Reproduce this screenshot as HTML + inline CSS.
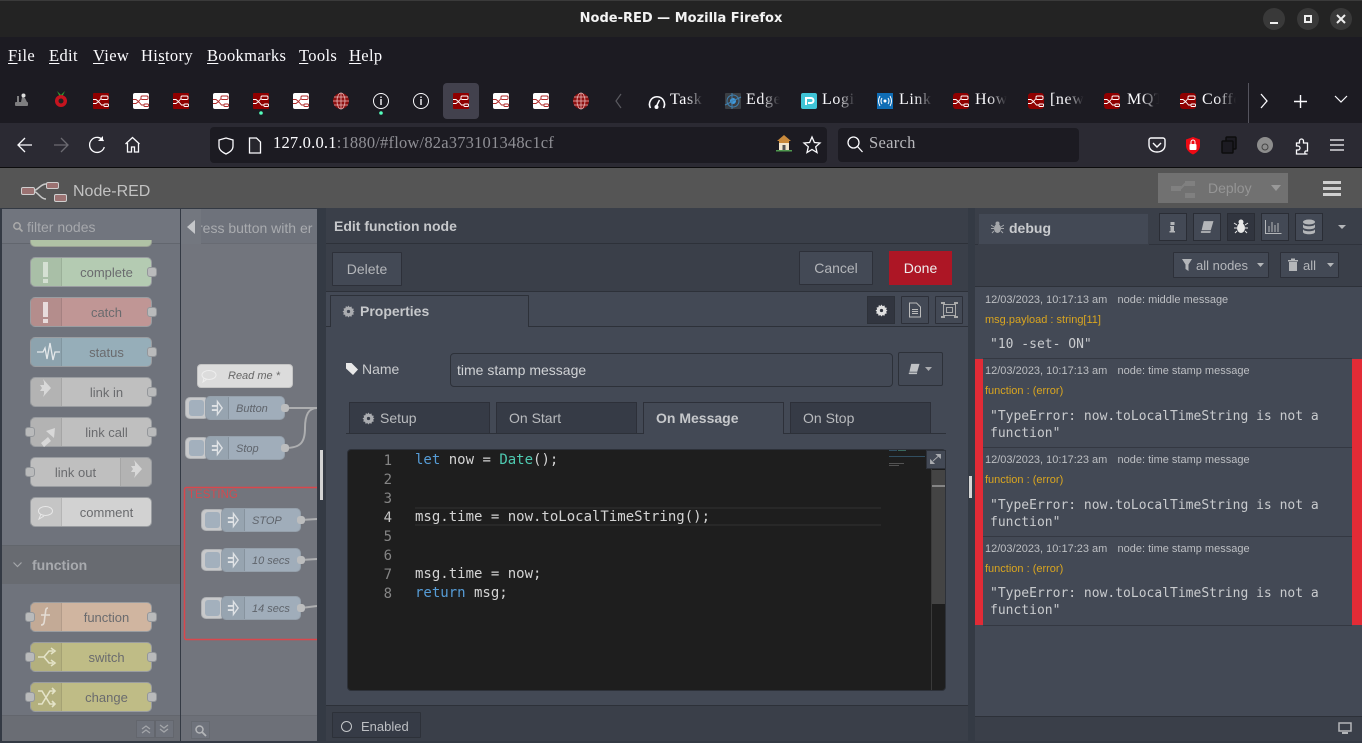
<!DOCTYPE html>
<html lang="en"><head><meta charset="utf-8"><title>Node-RED — Mozilla Firefox</title>
<style>
html,body{margin:0;padding:0;width:1362px;height:743px;overflow:hidden;background:#222;font-family:"Liberation Sans",sans-serif}
.a,.a *{box-sizing:border-box}
.a{position:absolute;white-space:nowrap}
.s{font-family:"Liberation Serif",serif;color:#fbfbfe}
.m{font-size:16.5px;top:46px;line-height:20px;letter-spacing:.35px}
.m u{text-underline-offset:2px}
.bk{font-size:16px;top:90px;line-height:20px;letter-spacing:.6px;overflow:hidden;-webkit-mask-image:linear-gradient(90deg,#000 45%,transparent);mask-image:linear-gradient(90deg,#000 45%,transparent)}
.btn{border:1px solid #2d3039;background:#434955;color:#b4b6ba;font-size:14px;text-align:center;border-radius:1px}
.pn{left:30px;width:122px;height:30px;border:1px solid #9a9da1;border-radius:5px;color:#6a6b6e;font-size:13px;text-align:center;line-height:30px;padding-left:31px}
.pn i{position:absolute;left:0;top:0;width:31px;height:28px;background:rgba(0,0,0,.06);border-right:1px solid rgba(0,0,0,.08)}
.pt{width:10px;height:10px;background:#b9babb;border:1px solid #94979b;border-radius:3px}
.cn{width:80px;height:24px;background:#a0adba;border:1px solid #95a0ab;border-radius:5px;color:#5f646b;font-size:11px;font-style:italic;line-height:24px;text-align:left;padding-left:30px}
.cn i{position:absolute;left:0;top:0;width:23px;height:22px;background:rgba(0,0,0,.05);border-right:1px solid rgba(0,0,0,.1)}
.cb{width:24px;height:22px;background:#c8c9cb;border:1px solid #b0b2b5;border-radius:5px}
.cb i{position:absolute;left:3px;top:2px;width:15px;height:16px;background:#a3b0bd;border-radius:3px}
.cp{width:8px;height:8px;background:#bcbdbe;border-radius:3px}
.ed{font-family:"DejaVu Sans Mono",monospace;font-size:14px;line-height:19px;color:#d4d4d4}
.ln{left:350px;color:#858585;font-family:"DejaVu Sans Mono",monospace;font-size:14px;line-height:19px;padding-left:30px;width:42px;text-align:right}
.tb{top:402px;width:141px;height:31px;background:#363b46;border:1px solid #2d3039;border-bottom:0;color:#b9bbbe;font-size:14px;line-height:30px;padding-left:12px}
.sb{top:213px;width:28px;height:28px;background:#434955;border:1px solid #2a2d35}
.msg{left:983px;width:369px;background:#434955;border-bottom:1px solid #343842}
.dt{position:absolute;left:2px;top:6px;font-size:11px;line-height:13px;color:#bdbfc3;white-space:pre}
.dt span{margin-left:1px}
.ty{position:absolute;left:2px;top:26px;font-size:11px;line-height:13px;color:#d9a520}
.bd{position:absolute;left:7px;font-family:"DejaVu Sans Mono",monospace;font-size:13px;line-height:17px;color:#c9cbce;white-space:pre}
.red{left:975px;width:8px;background:#e22b36}
.red2{left:1352px;width:10px;background:#e22b36}
</style></head>
<body>
<svg width="0" height="0" style="position:absolute">
<symbol id="nr" viewBox="0 0 16 16"><path d="M0 6.500h3l2.500 2-2.500 2H0M5.500 8.500L8 5.500M5.500 8.500l3 3.500H11" fill="none" stroke="currentColor" stroke-width=".9"/><rect x="8" y="3" width="7" height="3.500" rx="1.200" fill="none" stroke="currentColor" stroke-width=".9"/><rect x="11" y="11" width="4.500" height="2.500" rx=".8" fill="none" stroke="currentColor" stroke-width=".9"/></symbol>
<symbol id="gear" viewBox="0 0 12 12"><path d="M6 .5l1 1.500 1.800-.6.300 1.800 1.800.3-.6 1.800L11.500 6l-1.200 1 .6 1.800-1.800.3-.3 1.800-1.800-.6-1 1.200-1-1.200-1.800.6-.3-1.800-1.800-.3.600-1.800L.5 6l1.500-1-.6-1.800 1.800-.3.300-1.800 1.800.6z M6 4.500a1.500 1.500 0 100 3 1.500 1.500 0 000-3z" fill="currentColor" fill-rule="evenodd"/></symbol>
<symbol id="arr" viewBox="0 0 14 20"><path d="M7.500 2.500l5.500 7.500-5.500 7.500z" fill="none" stroke="currentColor" stroke-width="1.600"/><path d="M1 6.500h7v2.200H1zM1 11.300h7v2.200H1z" fill="currentColor"/></symbol>
<symbol id="book" viewBox="0 0 13 13"><path d="M3.500 1H12.500L10 9.500H1.500z" fill="currentColor"/><path d="M1.500 10.300H10l-.4 1.700H1.500c-1 0-1-1.700 0-1.700z" fill="currentColor"/></symbol>
</svg>

<!-- title bar -->
<div class="a" style="left:0;top:0;width:1362px;height:37px;background:#232323;border-top:1px solid #3a3a3a"></div>
<div class="a" style="left:0;top:10px;width:1362px;text-align:center;font:bold 13px/18px 'DejaVu Sans',sans-serif;color:#f3f3f3">Node-RED — Mozilla Firefox</div>
<div class="a" style="left:1263px;top:8px;width:22px;height:22px;border-radius:50%;background:#393939"></div>
<div class="a" style="left:1270px;top:22px;width:8px;height:2px;background:#eee"></div>
<div class="a" style="left:1297px;top:8px;width:22px;height:22px;border-radius:50%;background:#393939"></div>
<div class="a" style="left:1304px;top:15px;width:8px;height:8px;border:2px solid #eee"></div>
<div class="a" style="left:1330px;top:8px;width:22px;height:22px;border-radius:50%;background:#393939"></div>
<svg class="a" style="left:1336px;top:14px" width="10" height="10"><path d="M1 1l8 8M9 1l-8 8" stroke="#eee" stroke-width="2"/></svg>

<!-- menu + bookmarks -->
<div class="a" style="left:0;top:37px;width:1362px;height:86px;background:#1c1b22"></div>
<div class="a s m" style="left:8px"><u>F</u>ile</div>
<div class="a s m" style="left:49px"><u>E</u>dit</div>
<div class="a s m" style="left:93px"><u>V</u>iew</div>
<div class="a s m" style="left:141px">Hi<u>s</u>tory</div>
<div class="a s m" style="left:207px"><u>B</u>ookmarks</div>
<div class="a s m" style="left:299px"><u>T</u>ools</div>
<div class="a s m" style="left:349px"><u>H</u>elp</div>

<div class="a" style="left:443px;top:83px;width:36px;height:36px;background:#42414d;border-radius:4px"></div>
<svg class="a" style="left:0;top:83px" width="640" height="40">
<g transform="translate(15,10)" fill="#7e7e80"><rect y="9" width="13" height="4" rx="1"/><path d="M2 9V3h2v6zM6 9l1-5 3 1 2 4z"/><circle cx="8.500" cy="2.500" r="2" fill="#ddd"/></g>
<g transform="translate(54,8)"><path d="M3 0l4 4 4-4-3 6H6z" fill="#2fa52f"/><circle cx="7" cy="10" r="6" fill="#c5141f"/><circle cx="7" cy="10" r="2.500" fill="#222"/></g>
<g fill="#8f0000"><rect x="93" y="10" width="16" height="16" rx="1"/><rect x="173" y="10" width="16" height="16" rx="1"/><rect x="253" y="10" width="16" height="16" rx="1"/><rect x="453" y="10" width="16" height="16" rx="1"/></g>
<g fill="#fff"><rect x="133" y="10" width="16" height="16" rx="2"/><rect x="213" y="10" width="16" height="16" rx="2"/><rect x="293" y="10" width="16" height="16" rx="2"/><rect x="493" y="10" width="16" height="16" rx="2"/><rect x="533" y="10" width="16" height="16" rx="2"/></g>
<g color="#fff"><use href="#nr" x="93" y="10" width="16" height="16"/><use href="#nr" x="173" y="10" width="16" height="16"/><use href="#nr" x="253" y="10" width="16" height="16"/><use href="#nr" x="453" y="10" width="16" height="16"/></g>
<g color="#b02a2a"><use href="#nr" x="133" y="10" width="16" height="16"/><use href="#nr" x="213" y="10" width="16" height="16"/><use href="#nr" x="293" y="10" width="16" height="16"/><use href="#nr" x="493" y="10" width="16" height="16"/><use href="#nr" x="533" y="10" width="16" height="16"/></g>
<g><circle cx="341" cy="18" r="8" fill="#8f1010"/><g fill="none" stroke="#e8b8b8" stroke-width=".8"><ellipse cx="341" cy="18" rx="4" ry="8"/><path d="M333 18h16M334 14h14M334 22h14M341 10v16"/></g></g>
<g><circle cx="581" cy="18" r="8" fill="#8f1010"/><g fill="none" stroke="#e8b8b8" stroke-width=".8"><ellipse cx="581" cy="18" rx="4" ry="8"/><path d="M573 18h16M574 14h14M574 22h14M581 10v16"/></g></g>
<g fill="none" stroke="#fbfbfe" stroke-width="1"><circle cx="381" cy="18" r="7.500"/><circle cx="421" cy="18" r="7.500"/></g>
<g fill="#fbfbfe"><rect x="380.300" y="16" width="1.400" height="6"/><rect x="380.300" y="13.500" width="1.400" height="1.500"/><rect x="420.300" y="16" width="1.400" height="6"/><rect x="420.300" y="13.500" width="1.400" height="1.500"/></g>
<circle cx="261" cy="30" r="1.800" fill="#54ffbd"/><circle cx="381" cy="30" r="1.800" fill="#54ffbd"/>
<path d="M621 11l-5 7 5 7" fill="none" stroke="#5a5a60" stroke-width="1.200"/>
</svg>
<svg class="a" style="left:640px;top:83px" width="722" height="40">
<path d="M10.500 25a7.500 7.500 0 1113 0" fill="none" stroke="#fbfbfe" stroke-width="1.600"/><path d="M16.500 23l3-6" stroke="#fbfbfe" stroke-width="1.500"/><circle cx="16.500" cy="24" r="2" fill="#fbfbfe"/>
<rect x="85" y="10" width="16" height="16" rx="1" fill="#3b3f44"/><circle cx="93" cy="18" r="3" fill="#3f9be0"/><circle cx="93" cy="18" r="6" fill="none" stroke="#3f80b0"/><path d="M85 22L101 14M92 10v16" stroke="#3f80b0"/>
<rect x="161" y="10" width="16" height="16" rx="2" fill="#3fc4d6"/><path d="M166 22v-7h5a2 2 0 010 5h-3" fill="none" stroke="#fff" stroke-width="2"/>
<rect x="237" y="10" width="16" height="16" fill="#0f6db5"/><circle cx="245" cy="18" r="1.500" fill="#fff"/><path d="M242 15q-2 3 0 6M248 15q2 3 0 6M240 13q-3 5 0 10M250 13q3 5 0 10" fill="none" stroke="#fff"/>
<g fill="#8f0000"><rect x="313" y="10" width="16" height="16" rx="3"/><rect x="388" y="10" width="16" height="16" rx="3"/><rect x="464" y="10" width="16" height="16" rx="3"/><rect x="540" y="10" width="16" height="16" rx="3"/></g>
<g color="#fff"><use href="#nr" x="313" y="10" width="16" height="16"/><use href="#nr" x="388" y="10" width="16" height="16"/><use href="#nr" x="464" y="10" width="16" height="16"/><use href="#nr" x="540" y="10" width="16" height="16"/></g>
<path d="M608.500 0v40" stroke="#55545e"/>
<path d="M621 11l6 7-6 7" fill="none" stroke="#fbfbfe" stroke-width="1.300"/>
<path d="M660.500 12v13M654 18.500h13" stroke="#fbfbfe" stroke-width="1.400"/>
<path d="M695 13l6 6 6-6" fill="none" stroke="#fbfbfe" stroke-width="1.200"/>
</svg>
<div class="a s bk" style="left:670px;width:34px">Task</div>
<div class="a s bk" style="left:746px;width:34px">Edge</div>
<div class="a s bk" style="left:822px;width:34px">Login</div>
<div class="a s bk" style="left:899px;width:34px">Link</div>
<div class="a s bk" style="left:975px;width:32px">How</div>
<div class="a s bk" style="left:1050px;width:34px">[new</div>
<div class="a s bk" style="left:1127px;width:32px">MQT</div>
<div class="a s bk" style="left:1202px;width:34px">Coffee</div>

<!-- nav bar -->
<div class="a" style="left:0;top:123px;width:1362px;height:44px;background:#2b2a33"></div>
<div class="a" style="left:0;top:167px;width:1362px;height:1px;background:#0c0c0d"></div>
<div class="a" style="left:210px;top:127px;width:617px;height:36px;background:#1c1b22;border-radius:4px"></div>
<div class="a" style="left:838px;top:128px;width:241px;height:34px;background:#1c1b22;border-radius:4px"></div>
<svg class="a" style="left:0;top:123px" width="1362" height="44">
<g fill="none" stroke="#fbfbfe" stroke-width="1.300">
<path d="M32 22H19M25 15l-7 7 7 7"/>
<path d="M54 22h13M61 15l7 7-7 7" stroke="#6c6b72"/>
<path d="M103.500 18a7.500 7.500 0 10.800 6"/>
<path d="M125.500 21l7-6.500 7 6.500M127.500 20v9h4v-5h3v5h4v-9"/>
<path d="M226 15l7 2v6c0 4-3 6-7 8-4-2-7-4-7-8v-6z"/>
<path d="M249.500 15h7l4 4v11h-11z" fill="#fbfbfe" fill-opacity=".05"/>
<path d="M812 14l2.400 5.500 5.600.5-4.300 3.800 1.300 5.700-5-3-5 3 1.300-5.700-4.300-3.800 5.600-.5z"/>
<circle cx="853.500" cy="19.500" r="5.500"/><path d="M857.500 23.500l5 5.500"/>
<path d="M1151 15h12a2 2 0 012 2v5c0 4-3 7-8 7s-8-3-8-7v-5a2 2 0 012-2zM1153 20l4 4 4-4" stroke-width="1.400"/>
<path d="M1296.500 20h3v-2a2 2 0 014 0v2h4v8h-2a2 2 0 000 3h2v0h-11v-4h1.500a2 2 0 000-4h-1.500z" />
<path d="M1330 17h14M1330 22h14M1330 27h14" stroke-width="1.300"/>
</g>
<path d="M103 13v5h-5z" fill="#fbfbfe"/>
<path d="M1193 14l7 2.500v6c0 4-3 7-7 9-4-2-7-5-7-9v-6z" fill="#ee0a14"/><rect x="1189.500" y="21" width="7" height="6" rx="1" fill="#fff"/><path d="M1191 21v-2a2 2 0 014 0v2" fill="none" stroke="#fff"/>
<g fill="#1c1b22" stroke="#0c0c0d" stroke-width="1.500"><rect x="1226" y="14" width="10" height="12" rx="1"/><rect x="1222" y="18" width="11" height="12" rx="1"/></g>
<circle cx="1265" cy="22" r="8" fill="#8d8d8d"/><circle cx="1265" cy="24" r="3" fill="none" stroke="#444"/>
<path d="M777 18l7-6 7 6h-2v2h-10v-2z" fill="#c98a3c"/><rect x="779" y="20" width="10" height="7" fill="#f2e7d0"/><rect x="782.500" y="22" width="3" height="5" fill="#555"/><rect x="776" y="27" width="16" height="1.500" fill="#4f9a4f"/>
</svg>
<div class="a s" style="left:273px;top:133px;font-size:16.5px;line-height:20px;letter-spacing:.2px">127.0.0.1<span style="color:#8f8f95">:1880/#flow/82a373101348c1cf</span></div>
<div class="a s" style="left:869px;top:133px;font-size:16.5px;line-height:20px;color:#b8b8bc;letter-spacing:.3px">Search</div>

<!-- node-red header -->
<div class="a" style="left:0;top:168px;width:1362px;height:41px;background:#555"></div>
<svg class="a" style="left:20px;top:180px" width="50" height="24"><path d="M12 11c6 0 8-7 14-7M12 11c6 0 8 8 14 8" fill="none" stroke="#c9c9c9" stroke-width="1.500"/><g fill="#9b7272" stroke="#cfcfcf"><rect x="1.500" y="7.500" width="13" height="7" rx="1.500"/><rect x="26.500" y="2.500" width="12" height="6" rx="1.500"/><rect x="34.500" y="14.500" width="12" height="7" rx="1.500"/></g></svg>
<div class="a" style="left:73px;top:182px;color:#c2c2c2;font-size:16px;line-height:20px">Node-RED</div>
<div class="a" style="left:1158px;top:173px;width:130px;height:30px;background:#717171"></div>
<svg class="a" style="left:1168px;top:178px" width="40" height="22" fill="#808080"><rect x="3" y="8" width="10" height="5"/><rect x="17" y="3" width="10" height="5"/><rect x="17" y="15" width="10" height="5"/><path d="M12 11l6-6" stroke="#808080" stroke-width="2"/></svg>
<div class="a" style="left:1208px;top:179px;color:#959595;font-size:14px;line-height:18px">Deploy</div>
<svg class="a" style="left:1271px;top:185px" width="10" height="6"><path d="M0 0h10L5 6z" fill="#999"/></svg>
<div class="a" style="left:1323px;top:181px;width:18px;height:15px;border-top:3px solid #cfcfcf;border-bottom:3px solid #cfcfcf"></div>
<div class="a" style="left:1323px;top:187px;width:18px;height:3px;background:#cfcfcf"></div>

<!-- palette -->
<div class="a" style="left:0;top:208px;width:1362px;height:535px;background:#343a44"></div>
<div class="a" style="left:2px;top:209px;width:178px;height:532px;background:#6f737c"></div>
<div class="a" style="left:2px;top:209px;width:178px;height:35px;border-bottom:1px solid #62666e;background:#71757e"></div>
<svg class="a" style="left:12px;top:221px" width="12" height="12"><circle cx="5" cy="5" r="3.200" fill="none" stroke="#aaa" stroke-width="1.500"/><path d="M7.500 7.500l3 3" stroke="#aaa" stroke-width="1.700"/></svg>
<div class="a" style="left:27px;top:219px;font-size:14px;line-height:16px;color:#a6a8ac">filter nodes</div>

<div class="a" style="left:30px;top:240px;width:122px;height:7px;background:#b0c2a5;border:1px solid #9ba295;border-top:0;border-radius:0 0 5px 5px"></div>
<div class="a pn" style="top:257px;background:#b4cbb2">complete<i></i></div>
<div class="a pn" style="top:297px;background:#c09695">catch<i></i></div>
<div class="a pn" style="top:337px;background:#96aeb9">status<i></i></div>
<div class="a pn" style="top:377px;background:#bfbfbf">link in<i></i></div>
<div class="a pn" style="top:417px;background:#bfbfbf">link call<i></i></div>
<div class="a pn" style="top:457px;background:#bfbfbf;padding:0 31px 0 0">link out<i style="left:auto;right:0;border-right:0;border-left:1px solid rgba(0,0,0,.08)"></i></div>
<div class="a pn" style="top:497px;background:#d2d2d2">comment<i></i></div>
<div class="a" style="left:2px;top:545px;width:178px;height:39px;background:#686b71;border-top:1px solid #62666c"></div>
<svg class="a" style="left:12px;top:561px" width="11" height="8"><path d="M1.500 1.500L5.500 5.500 9.500 1.500" fill="none" stroke="#a4a6aa" stroke-width="1.200"/></svg>
<div class="a" style="left:32px;top:556px;font-size:14px;font-weight:bold;line-height:18px;color:#a8aaae">function</div>
<div class="a pn" style="top:602px;background:#d0b5a0">function<i></i></div>
<div class="a pn" style="top:642px;background:#bfbc86">switch<i></i></div>
<div class="a pn" style="top:682px;background:#bfbc86">change<i></i></div>
<!-- palette ports -->
<div class="a pt" style="left:147px;top:267px"></div><div class="a pt" style="left:147px;top:307px"></div><div class="a pt" style="left:147px;top:347px"></div><div class="a pt" style="left:147px;top:387px"></div><div class="a pt" style="left:147px;top:427px"></div><div class="a pt" style="left:25px;top:427px"></div><div class="a pt" style="left:25px;top:467px"></div><div class="a pt" style="left:147px;top:612px"></div><div class="a pt" style="left:25px;top:612px"></div><div class="a pt" style="left:147px;top:652px"></div><div class="a pt" style="left:25px;top:652px"></div><div class="a pt" style="left:147px;top:692px"></div><div class="a pt" style="left:25px;top:692px"></div>
<!-- palette icons -->
<svg class="a" style="left:30px;top:257px" width="122" height="470">
<g fill="#d5e0d3"><rect x="13" y="5" width="5" height="15"/><rect x="13" y="22" width="5" height="4"/></g>
<g fill="#e8dcdc"><rect x="13" y="45" width="5" height="15"/><rect x="13" y="62" width="5" height="4"/></g>
<path d="M7 95h6l2-4 2 11 3-16 3 17 2-8h5" fill="none" stroke="#e4e8ea" stroke-width="1.300"/>
<path d="M10 128h4v-3l-1-3 8 9-8 9 1-3v-3h-4l2-3z" fill="#d8d8d8"/>
<path d="M11 186l7-6 3 4-7 6zM16 174l9-3-1 10z" fill="#d8d8d8"/>
<path d="M101 209h4v-3l-1-3 8 9-8 9 1-3v-3h-4l2-3z" fill="#d8d8d8"/>
<ellipse cx="15.500" cy="254" rx="7" ry="4.500" fill="none" stroke="#e8e8e8"/><path d="M11 257l-2 5 5-3" fill="none" stroke="#e8e8e8"/>
<path d="M18 351c-3 0-2 3-3 8s0 9-4 9M11 358h9" fill="none" stroke="#e4dcd4" stroke-width="1.600"/>
<path d="M8 400h6l5-6h4M14 400l5 6h4M21 391l4 3-4 3M21 403l4 3-4 3" fill="none" stroke="#e4e3c8" stroke-width="1.600"/>
<path d="M8 434h4l8 13h4M8 447h4l8-13h4M22 431l3 3-3 3M22 444l3 3-3 3" fill="none" stroke="#e4e3c8" stroke-width="1.600"/>
</svg>
<div class="a" style="left:2px;top:715px;width:178px;height:26px;background:#6a6d74;border-top:1px solid #63666d"></div>
<div class="a" style="left:136px;top:720px;width:19px;height:18px;background:#6e727b;border:1px solid #63666d"></div>
<div class="a" style="left:155px;top:720px;width:19px;height:18px;background:#6e727b;border:1px solid #63666d"></div>
<svg class="a" style="left:136px;top:720px" width="38" height="18" fill="none" stroke="#a4a6aa" stroke-width="1.300"><path d="M6 9l4-3 4 3M6 13l4-3 4 3M24 5l4 3 4-3M24 9l4 3 4-3"/></svg>

<!-- workspace -->
<div class="a" style="left:181px;top:209px;width:136px;height:532px;background:#72757d;overflow:hidden"></div>
<div class="a" style="left:181px;top:209px;width:136px;height:35px;background:#6e727b;border-bottom:1px solid #686b73"></div>
<div class="a" style="left:181px;top:209px;width:20px;height:35px;background:#73777f"></div>
<svg class="a" style="left:187px;top:220px" width="9" height="14"><path d="M8 0v14L0 7z" fill="#c4c6c9"/></svg>
<div class="a" style="left:201px;top:219px;width:112px;height:18px;overflow:hidden;font-size:14px;line-height:18px;color:#a9abaf;text-indent:-3px">ress button with error</div>
<div class="a" style="left:181px;top:715px;width:136px;height:26px;background:#6d7078;border-top:1px solid #676a71"></div>
<div class="a" style="left:191px;top:721px;width:19px;height:18px;background:#6f737c;border:1px solid #666a71"></div>
<svg class="a" style="left:194px;top:724px" width="13" height="13"><circle cx="5.500" cy="5.500" r="3.500" fill="none" stroke="#b4b6b9" stroke-width="1.500"/><path d="M8 8l4 4" stroke="#b4b6b9" stroke-width="1.800"/></svg>

<svg class="a" style="left:181px;top:244px" width="136" height="471">
<g fill="none" stroke="#adaeb0" stroke-width="2">
<path d="M104 164h32M104 204c16 0 20-6 20-20c0-14 4-20 12-20"/>
<path d="M120 276l16-1M120 316l16-1M120 364l16-2"/></g>
<rect x="3.500" y="243.500" width="140" height="152" rx="2" fill="none" stroke="#d9474c" stroke-width="1.500"/>
</svg>
<div class="a" style="left:188px;top:489px;font-size:11.500px;line-height:13px;color:#d14b50">TESTING</div>
<div class="a" style="left:197px;top:364px;width:96px;height:24px;background:#dcdcdc;border:1px solid #c4c4c4;border-radius:4px;color:#666;font-size:11px;font-style:italic;line-height:22px;padding-left:30px">Read me *</div>
<svg class="a" style="left:199px;top:368px" width="20" height="16"><ellipse cx="10" cy="7" rx="7" ry="4.500" fill="none" stroke="#eee"/><path d="M5 10l-1 4 4-3" fill="none" stroke="#eee"/><path d="M21.500 -4v22" stroke="#ccc"/></svg>

<div class="a cb" style="left:185px;top:397px"><i></i></div><div class="a cb" style="left:185px;top:437px"><i></i></div>
<div class="a cb" style="left:201px;top:509px"><i></i></div><div class="a cb" style="left:201px;top:549px"><i></i></div><div class="a cb" style="left:201px;top:597px"><i></i></div>
<div class="a cn" style="left:205px;top:396px">Button<i></i></div>
<div class="a cn" style="left:205px;top:436px">Stop<i></i></div>
<div class="a cn" style="left:221px;top:508px">STOP<i></i></div>
<div class="a cn" style="left:221px;top:548px">10 secs<i></i></div>
<div class="a cn" style="left:221px;top:596px">14 secs<i></i></div>
<div class="a cp" style="left:281px;top:404px"></div><div class="a cp" style="left:281px;top:444px"></div><div class="a cp" style="left:297px;top:516px"></div><div class="a cp" style="left:297px;top:556px"></div><div class="a cp" style="left:297px;top:604px"></div>
<svg class="a" style="left:211px;top:398px;color:#dfe2e5" width="12" height="20"><use href="#arr" width="12" height="20"/></svg>
<svg class="a" style="left:211px;top:438px;color:#dfe2e5" width="12" height="20"><use href="#arr" width="12" height="20"/></svg>
<svg class="a" style="left:227px;top:510px;color:#dfe2e5" width="12" height="20"><use href="#arr" width="12" height="20"/></svg>
<svg class="a" style="left:227px;top:550px;color:#dfe2e5" width="12" height="20"><use href="#arr" width="12" height="20"/></svg>
<svg class="a" style="left:227px;top:598px;color:#dfe2e5" width="12" height="20"><use href="#arr" width="12" height="20"/></svg>
<div class="a" style="left:320px;top:450px;width:3px;height:50px;background:#d4d4d4"></div>

<!-- edit tray -->
<div class="a" style="left:326px;top:208px;width:642px;height:533px;background:#434955"></div>
<div class="a" style="left:326px;top:208px;width:642px;height:36px;background:#3a3f49;border-bottom:1px solid #2d3139"></div>
<div class="a" style="left:334px;top:217px;font-size:14px;font-weight:bold;line-height:18px;color:#c6c8cb">Edit function node</div>
<div class="a" style="left:326px;top:244px;width:642px;height:48px;background:#3a3f49;border-bottom:1px solid #2d3139"></div>
<div class="a btn" style="left:332px;top:252px;width:70px;height:34px;line-height:32px">Delete</div>
<div class="a btn" style="left:799px;top:251px;width:74px;height:34px;line-height:32px">Cancel</div>
<div class="a" style="left:889px;top:251px;width:63px;height:34px;background:#ad1625;color:#eee;font-size:14px;line-height:34px;text-align:center">Done</div>
<div class="a" style="left:326px;top:326px;width:642px;height:1px;background:#2d3139"></div>
<div class="a" style="left:330px;top:295px;width:199px;height:32px;background:#434955;border:1px solid #2d3139;border-bottom:0;border-radius:1px 1px 0 0;color:#c6c8cb;font-size:14px;font-weight:bold;line-height:30px;padding-left:29px">Properties</div>
<svg class="a" style="left:342px;top:305px;color:#aaacb0" width="13" height="13"><use href="#gear" width="13" height="13"/></svg>
<div class="a" style="left:867px;top:296px;width:28px;height:28px;background:#31353f;border:1px solid #2d3139"></div>
<svg class="a" style="left:875px;top:304px;color:#e0e0e0" width="13" height="13"><use href="#gear" width="13" height="13"/></svg>
<div class="a btn" style="left:901px;top:296px;width:28px;height:28px"></div>
<svg class="a" style="left:908px;top:302px" width="14" height="16" fill="none" stroke="#bbb"><path d="M1.500 1h7l4 4v10h-11zM4 7.500h6M4 9.500h6M4 11.500h6"/></svg>
<div class="a btn" style="left:935px;top:296px;width:28px;height:28px"></div>
<svg class="a" style="left:941px;top:302px" width="17" height="16" fill="none" stroke="#aaa"><rect x="2.500" y="2.500" width="12" height="11"/><rect x="5.500" y="5.500" width="6" height="5"/><path d="M0 1h4M13 1h4M0 15h4M13 15h4" stroke-width="2"/></svg>
<svg class="a" style="left:345px;top:362px" width="14" height="14"><path d="M1 1h5.500l6.500 6.500-5 5.500L1 6.500z" fill="#e8e8e8"/></svg>
<div class="a" style="left:362px;top:360px;font-size:14px;line-height:18px;color:#c9cbce">Name</div>
<div class="a" style="left:450px;top:353px;width:443px;height:34px;border:1px solid #2d3139;border-radius:4px;background:#434955;color:#d0d2d5;font-size:14px;line-height:33px;padding-left:6px">time stamp message</div>
<div class="a" style="left:898px;top:352px;width:45px;height:34px;border:1px solid #2d3139;border-radius:2px"></div>
<svg class="a" style="left:908px;top:363px;color:#c0c2c5" width="26" height="12"><use href="#book" width="12" height="12"/><path d="M17 4h7l-3.500 4z" fill="#a9abaf"/></svg>
<div class="a" style="left:346px;top:433px;width:600px;height:1px;background:#2d3139"></div>
<div class="a tb" style="left:349px;padding-left:30px">Setup</div>
<svg class="a" style="left:362px;top:412px;color:#aaacb0" width="13" height="13"><use href="#gear" width="13" height="13"/></svg>
<div class="a tb" style="left:496px">On Start</div>
<div class="a tb" style="left:643px;background:#434955;height:32px;font-weight:bold;color:#c6c8cb">On Message</div>
<div class="a tb" style="left:790px">On Stop</div>
<!-- code editor -->
<div class="a" style="left:347px;top:449px;width:599px;height:242px;background:#1e1e1e;border:1px solid #2d3139;border-radius:4px"></div>
<div class="a" style="left:415px;top:507px;width:466px;height:19px;border-top:2px solid #282828;border-bottom:2px solid #282828"></div>
<div class="a ln" style="top:452px">1</div><div class="a ln" style="top:471px">2</div><div class="a ln" style="top:490px">3</div><div class="a ln" style="top:509px;color:#c6c6c6">4</div><div class="a ln" style="top:528px">5</div><div class="a ln" style="top:547px">6</div><div class="a ln" style="top:566px">7</div><div class="a ln" style="top:585px">8</div>
<div class="a ed" style="left:415px;top:451px"><span style="color:#569cd6">let</span> now = <span style="color:#4ec9b0">Date</span>();</div>
<div class="a ed" style="left:415px;top:508px">msg.time = now.toLocalTimeString();</div>
<div class="a ed" style="left:415px;top:565px">msg.time = now;</div>
<div class="a ed" style="left:415px;top:584px"><span style="color:#569cd6">return</span> msg;</div>
<div class="a" style="left:931px;top:450px;width:1px;height:240px;background:#3a3a3a"></div>
<div class="a" style="left:932px;top:470px;width:13px;height:134px;background:#444"></div>
<div class="a" style="left:932px;top:485px;width:13px;height:2px;background:#858585"></div>
<svg class="a" style="left:889px;top:450px" width="36" height="18" opacity=".6"><g fill="#3f6e8c"><rect width="8" height="1"/><rect y="6" width="36" height="1"/></g><g fill="#4b9a88"><rect x="9" width="8" height="1"/></g><g fill="#777"><rect y="13" width="15" height="1"/><rect y="15" width="10" height="1"/></g></svg>
<div class="a" style="left:926px;top:450px;width:20px;height:19px;background:#434955;border:1px solid #2d3139"></div>
<svg class="a" style="left:930px;top:454px" width="11" height="10" fill="#aaacb0"><path d="M6.500 .5h4v3.500zM.5 9.500V6l3.500 3.500zM3 7l5-4.500" stroke="#aaacb0" stroke-width=".9"/></svg>
<div class="a" style="left:326px;top:705px;width:642px;height:36px;background:#3a3f49;border-top:1px solid #2d3139"></div>
<div class="a" style="left:332px;top:712px;width:89px;height:26px;background:#363b46;border:1px solid #2d3139;border-radius:1px;font-size:13px;line-height:27px;padding-left:28px;color:#bdbfc3">Enabled</div>
<div class="a" style="left:341px;top:721px;width:11px;height:11px;border:1px solid #c4c6c9;border-radius:50%"></div>
<div class="a" style="left:969px;top:476px;width:3px;height:22px;background:#d6d6d6"></div>

<!-- sidebar -->
<div class="a" style="left:975px;top:208px;width:387px;height:533px;background:#434955"></div>
<div class="a" style="left:975px;top:208px;width:387px;height:79px;background:#3a3f49;border-bottom:1px solid #2d3139"></div>
<div class="a" style="left:975px;top:244px;width:387px;height:1px;background:#2f333c"></div>
<div class="a" style="left:978px;top:213px;width:171px;height:32px;background:#434955;border:1px solid #3a3f49;color:#c9cbce;font-size:14px;font-weight:bold;line-height:29px;padding-left:30px">debug</div>
<svg class="a" style="left:991px;top:221px" width="13" height="13" fill="#a4a6aa"><ellipse cx="6.500" cy="7.500" rx="3.500" ry="4.500"/><circle cx="6.500" cy="2.500" r="2"/><path d="M0 4l3 2M13 4l-3 2M0 7.500h3M10 7.500h3M1 12l2-2M12 12l-2-2" stroke="#a4a6aa"/></svg>
<div class="a sb" style="left:1159px"></div><div class="a sb" style="left:1193px"></div><div class="a sb" style="left:1227px;background:#31353f"></div><div class="a sb" style="left:1261px"></div><div class="a sb" style="left:1295px"></div>
<svg class="a" style="left:1159px;top:213px;color:#b4b6b9" width="192" height="28">
<g fill="#b4b6b9"><rect x="11.500" y="9" width="4" height="3"/><path d="M11 13h4v5h1v1.500h-5.500V18h1v-4H11z"/>
<ellipse cx="150" cy="9" rx="6" ry="2.500"/><path d="M144 11c0 3 12 3 12 0v3c0 3-12 3-12 0zM144 16c0 3 12 3 12 0v3c0 3-12 3-12 0z"/></g>
<use href="#book" x="41" y="7" width="14" height="14"/>
<g fill="#e8e8e8"><ellipse cx="82" cy="15" rx="4" ry="5"/><circle cx="82" cy="9" r="2.500"/><path d="M75 10l3 2M89 10l-3 2M75 15h3M86 15h3M76 20l2-2M88 20l-2-2" stroke="#e8e8e8"/></g>
<g fill="none" stroke="#b4b6b9"><path d="M106.500 7v13.500h16M110 19v-6M113 19V9M116 19v-7M119 19v-9" /></g>
<path d="M179 12h8l-4 4z" fill="#b4b6b9"/>
</svg>
<div class="a btn" style="left:1173px;top:252px;width:96px;height:26px;font-size:13px;line-height:25px;text-align:left;padding-left:22px">all nodes</div>
<div class="a btn" style="left:1280px;top:252px;width:59px;height:26px;font-size:13px;line-height:25px;text-align:left;padding-left:22px">all</div>
<svg class="a" style="left:1180px;top:257px" width="160" height="16" fill="#b4b6b9"><path d="M2 2h10L8.500 7.500V14L5.500 12V7.500z"/><path d="M77 6h7l-3.500 4z"/><path d="M109 5h8v9h-8zM108 3h10v1.500h-10zM111 1.500h4V3h-4z"/><path d="M147 6h7l-3.500 4z"/></svg>

<div class="a msg" style="top:287px;height:72px"><div class="dt" style="top:7px">12/03/2023, 10:17:13 am<span>   node: middle message</span></div><div class="ty" style="top:27px">msg.payload : string[11]</div><div class="bd" style="top:49px">"10 -set- ON"</div></div>
<div class="a msg" style="top:359px;height:89px"><div class="dt" style="top:6px">12/03/2023, 10:17:13 am<span>   node: time stamp message</span></div><div class="ty" style="top:26px">function : (error)</div><div class="bd" style="top:49px">"TypeError: now.toLocalTimeString is not a
function"</div></div>
<div class="a msg" style="top:448px;height:89px"><div class="dt" style="top:6px">12/03/2023, 10:17:23 am<span>   node: time stamp message</span></div><div class="ty" style="top:26px">function : (error)</div><div class="bd" style="top:49px">"TypeError: now.toLocalTimeString is not a
function"</div></div>
<div class="a msg" style="top:537px;height:89px"><div class="dt" style="top:6px">12/03/2023, 10:17:23 am<span>   node: time stamp message</span></div><div class="ty" style="top:26px">function : (error)</div><div class="bd" style="top:48px">"TypeError: now.toLocalTimeString is not a
function"</div></div>
<div class="a red" style="top:359px;height:266px"></div>
<div class="a red2" style="top:359px;height:266px"></div>
<div class="a" style="left:975px;top:716px;width:387px;height:25px;background:#3a3f49;border-top:1px solid #2d3139"></div>
<svg class="a" style="left:1338px;top:722px" width="14" height="13"><rect x="1" y="1" width="12" height="8" fill="none" stroke="#b4b6b9" stroke-width="1.500"/><path d="M4 11h6" stroke="#b4b6b9" stroke-width="2"/></svg>
</body></html>
